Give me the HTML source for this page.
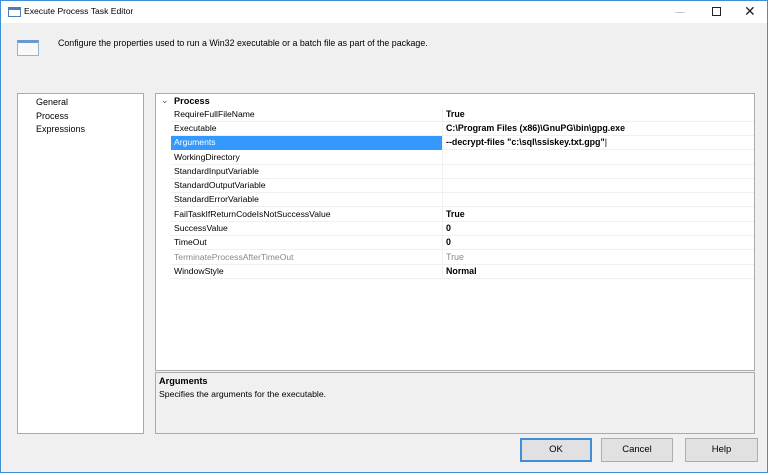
<!DOCTYPE html>
<html><head><style>
*{margin:0;padding:0;box-sizing:border-box}
body{width:768px;height:473px;overflow:hidden;background:#f0f0f0;font-family:"Liberation Sans",sans-serif;font-size:9px;color:#000;position:relative}
.win{position:absolute;left:0;top:0;width:768px;height:473px;border:1px solid #3c8fd8;}
.title{position:absolute;left:0;top:0;width:766px;height:22px;background:#fff}
.abs{position:absolute}
.row{position:absolute;left:170px;width:583px;height:14px;border-bottom:1px solid #f0f0f0;line-height:13px}
.row .n{position:absolute;left:3px;font-size:8.6px}
.row .v{position:absolute;left:275px;font-weight:bold;font-size:8.9px}
.btn{position:absolute;top:437px;height:24px;background:#e1e1e1;border:1px solid #adadad;text-align:center;line-height:22px;font-size:9.5px}
</style></head><body>
<div class="win">
<div class="title">
 <div class="abs" style="left:7px;top:6px;width:13px;height:10px;border:1px solid #4a7fb5;border-top:3px solid #4a7fb5;background:#fff"></div>
 <div class="abs" style="left:23px;top:5px;font-size:8.6px">Execute Process Task Editor</div>
 <div class="abs" style="left:674px;top:11px;width:10px;height:1px;background:#ccc"></div>
 <div class="abs" style="left:711px;top:6px;width:9px;height:9px;border:1px solid #222"></div>
 <div class="abs" style="left:743px;top:2px;font-size:14px;color:#222">✕</div>
</div>
<div class="abs" style="left:16px;top:39px;width:22px;height:16px;border:1px solid #9cb3cc;border-top:3px solid #6a9bd0;background:#f8f8f8"></div>
<div class="abs" style="left:57px;top:37px;font-size:8.85px">Configure the properties used to run a Win32 executable or a batch file as part of the package.</div>
<div class="abs" style="left:16px;top:92px;width:127px;height:341px;background:#fff;border:1px solid #aaa"></div>
<div class="abs" style="left:35px;top:95px;line-height:13.5px;font-size:9px">General<br>Process<br>Expressions</div>
<div class="abs" style="left:154px;top:92px;width:600px;height:278px;background:#fff;border:1px solid #aaa"></div>
<div class="abs" style="left:160px;top:94px;font-size:9px;color:#555">⌄</div>
<div class="abs" style="left:173px;top:95px;font-weight:bold;font-size:9.2px">Process</div>
<div class="row" style="top:107px"><span class="n">RequireFullFileName</span><span class="v">True</span></div>
<div class="row" style="top:121px"><span class="n">Executable</span><span class="v">C:\Program Files (x86)\GnuPG\bin\gpg.exe</span></div>
<div class="row" style="top:135px"><span class="abs" style="left:0;top:0;width:271px;height:14px;background:#3399ff"></span><span class="n" style="color:#fff">Arguments</span><span class="v">--decrypt-files "c:\sql\ssiskey.txt.gpg"<span style="font-weight:normal">|</span></span></div>
<div class="row" style="top:150px"><span class="n">WorkingDirectory</span></div>
<div class="row" style="top:164px"><span class="n">StandardInputVariable</span></div>
<div class="row" style="top:178px"><span class="n">StandardOutputVariable</span></div>
<div class="row" style="top:192px"><span class="n">StandardErrorVariable</span></div>
<div class="row" style="top:207px"><span class="n">FailTaskIfReturnCodeIsNotSuccessValue</span><span class="v">True</span></div>
<div class="row" style="top:221px"><span class="n">SuccessValue</span><span class="v">0</span></div>
<div class="row" style="top:235px"><span class="n">TimeOut</span><span class="v">0</span></div>
<div class="row" style="top:250px;color:#888"><span class="n">TerminateProcessAfterTimeOut</span><span class="v" style="font-weight:normal">True</span></div>
<div class="row" style="top:264px"><span class="n">WindowStyle</span><span class="v">Normal</span></div>
<div class="abs" style="left:441px;top:107px;width:1px;height:171px;background:#f0f0f0"></div>
<div class="abs" style="left:154px;top:371px;width:600px;height:62px;border:1px solid #aaa;background:#f0f0f0"></div>
<div class="abs" style="left:158px;top:375px;font-weight:bold;font-size:9.2px">Arguments</div>
<div class="abs" style="left:158px;top:388px;font-size:8.7px">Specifies the arguments for the executable.</div>
<div class="btn" style="left:519px;width:72px;border:1px solid #3c8fd8;box-shadow:inset 0 0 0 1px #3c8fd8">OK</div>
<div class="btn" style="left:600px;width:72px">Cancel</div>
<div class="btn" style="left:684px;width:73px">Help</div>
</div>
</body></html>
